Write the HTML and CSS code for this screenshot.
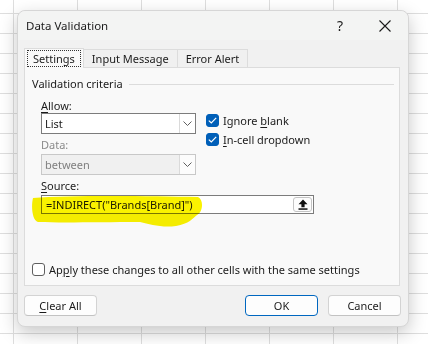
FILE: index.html
```html
<!DOCTYPE html>
<html lang="en">
<head>
    <meta charset="UTF-8">
    <title>Data Validation</title>
    <link rel="stylesheet" href="styles.css">
</head>
<body>
<div class="sheet">
    <div class="dialog">
        <div class="titlebar">
            <span class="title">Data Validation</span>
            <span class="help">?</span>
            <span class="close">
                <svg width="12" height="12" viewBox="0 0 12 12"><path d="M0.5 0.5 L11.5 11.5 M11.5 0.5 L0.5 11.5" stroke="#1b1b1b" stroke-width="1.1" fill="none"/></svg>
            </span>
        </div>

        <div class="tabs">
            <div class="tab active"><span class="focus">Settings</span></div>
            <div class="tab">Input Message</div>
            <div class="tab">Error Alert</div>
        </div>

        <div class="panel">
            <div class="legend">
                <span>Validation criteria</span>
                <span class="rule"></span>
            </div>

            <div class="criteria">
                <div class="row">
                    <div class="leftcol">
                        <div class="label first"><u>A</u>llow:</div>
                        <div class="select">
                            <span class="value">List</span>
                            <span class="drop"><svg width="9" height="5" viewBox="0 0 9 5"><path d="M0.5 0.5 L4.5 4.5 L8.5 0.5" stroke="#5f5f5f" stroke-width="1" fill="none"/></svg></span>
                        </div>
                        <div class="label disabled">Data:</div>
                        <div class="select off">
                            <span class="value">between</span>
                            <span class="drop"><svg width="9" height="5" viewBox="0 0 9 5"><path d="M0.5 0.5 L4.5 4.5 L8.5 0.5" stroke="#5f5f5f" stroke-width="1" fill="none"/></svg></span>
                        </div>
                    </div>
                    <div class="rightcol">
                        <div class="check">
                            <span class="box on"><svg width="9" height="7" viewBox="0 0 9 7"><path d="M0.8 3.6 L3.3 6 L8.2 0.9" stroke="#fff" stroke-width="1.2" fill="none"/></svg></span>
                            <span>Ignore <u>b</u>lank</span>
                        </div>
                        <div class="check">
                            <span class="box on"><svg width="9" height="7" viewBox="0 0 9 7"><path d="M0.8 3.6 L3.3 6 L8.2 0.9" stroke="#fff" stroke-width="1.2" fill="none"/></svg></span>
                            <span><u>I</u>n-cell dropdown</span>
                        </div>
                    </div>
                </div>

                <div class="label"><u>S</u>ource:</div>
                <div class="source">
                    <span class="formula">=INDIRECT("Brands[Brand]")</span>
                    <span class="pick">
                        <svg width="10" height="11" viewBox="0 0 10 11"><path d="M5 0.5 L9.5 5.2 L6.6 5.2 L6.6 8.3 L3.4 8.3 L3.4 5.2 L0.5 5.2 Z" fill="#111"/><rect x="0.5" y="9.3" width="9" height="1.5" fill="#111"/></svg>
                    </span>
                </div>
            </div>

            <div class="apply">
                <span class="box"></span>
                <span>Ap<u>p</u>ly these changes to all other cells with the same settings</span>
            </div>
        </div>

        <div class="footer">
            <button type="button" class="btn"><u>C</u>lear All</button>
            <span class="spacer"></span>
            <button type="button" class="btn primary">OK</button>
            <button type="button" class="btn">Cancel</button>
        </div>
    </div>

    <!-- marker highlight drawn over the source box -->
    <svg class="marker" width="428" height="344" viewBox="0 0 428 344">
        <path d="M33 198 C70 195 150 196 198 197 C204 200 203 212 197 215 C193 218 189 224 176 226 C161 228 150 224 140 222 C100 222 62 223 38 222 C32 220 31 206 33 198 Z" fill="#faf200"/>
    </svg>
</div>
</body>
</html>
```

FILE: styles.css
```css
* {
    box-sizing: border-box;
}
body {
    margin: 0;
    font-family: "Noto Sans", "Open Sans", sans-serif;
    font-size: 11px;
    color: #1b1b1b;
}
u {
    text-decoration-thickness: 1px;
    text-underline-offset: 2px;
}

/* excel grid behind the dialog */
.sheet {
    position: relative;
    width: 428px;
    height: 344px;
    overflow: hidden;
    padding: 10px 0 0 17px;
    background-color: #fff;
    background-image:
        linear-gradient(to right, #dedede 1px, transparent 1px),
        linear-gradient(to bottom, #dedede 1px, transparent 1px);
    background-size: 64px 20px;
    background-position: 13px 13px;
}

.dialog {
    width: 392px;
    height: 317px;
    background: #f1f1f1;
    border: 1px solid #d6d6d6;
    border-radius: 8px;
    box-shadow: 0 6px 18px rgba(0, 0, 0, 0.22);
    display: flex;
    flex-direction: column;
}

.titlebar {
    height: 29px;
    margin-bottom: 9px;
    display: flex;
    align-items: center;
    padding-left: 8px;
    background: #f3f4f3;
    border-radius: 8px 8px 0 0;
}
.title {
    font-size: 11.5px;
    flex: 1;
}
.help {
    font-size: 14px;
    width: 44px;
    text-align: center;
}
.close {
    width: 46px;
    display: flex;
    justify-content: center;
}

.tabs {
    display: flex;
    margin-left: 6px;
    height: 19px;
}
.tab {
    height: 19px;
    padding: 0 8px;
    line-height: 18px;
    border: 1px solid #dcdcdc;
    border-bottom: none;
    border-left: none;
    background: #f0f0f0;
}
.tab.active {
    background: #f9f9f9;
    border-left: 1px solid #dcdcdc;
    padding: 1px 2px 0 2px;
    margin-top: -1px;
    height: 20px;
    position: relative;
    z-index: 1;
}
.focus {
    display: block;
    border: 1px dotted #333;
    padding: 0 5px;
    line-height: 15px;
}

.panel {
    width: 376px;
    height: 219px;
    margin-left: 6px;
    margin-top: -1px;
    background: #f9f9f9;
    border: 1px solid #dcdcdc;
    display: flex;
    flex-direction: column;
}

.legend {
    display: flex;
    align-items: center;
    padding: 8px 5px 0 7px;
    line-height: 16px;
}
.rule {
    flex: 1;
    height: 1px;
    background: #dcdcdc;
    margin-left: 6px;
}

.criteria {
    padding-left: 16px;
    margin-top: 6px;
}
.row {
    display: flex;
}
.leftcol {
    width: 155px;
}
.rightcol {
    padding: 13px 0 0 10px;
}

.label {
    height: 20px;
    padding-top: 2px;
    line-height: 18px;
}
.label.first {
    height: 15px;
    padding-top: 0;
    line-height: 15px;
}
.label.disabled {
    color: #8a8a8a;
}

.select {
    height: 21px;
    display: flex;
    background: #fff;
    border: 1px solid #7c7c7c;
}
.select .value {
    flex: 1;
    padding-left: 3px;
    line-height: 19px;
}
.select .drop {
    width: 16px;
    border-left: 1px solid #dadada;
    display: flex;
    align-items: center;
    justify-content: center;
}
.select.off {
    background: #f0f0f0;
    border-color: #c8c8c8;
    color: #7f7f7f;
}
.select.off .drop {
    background: #fcfcfc;
}

.check {
    height: 19px;
    display: flex;
    align-items: center;
    gap: 4px;
}
.box {
    width: 13px;
    height: 13px;
    border: 1px solid #5f5f5f;
    border-radius: 3px;
    background: #fff;
    display: flex;
    align-items: center;
    justify-content: center;
}
.box.on {
    background: #005fb8;
    border-color: #005fb8;
}

.source {
    width: 273px;
    height: 19px;
    display: flex;
    align-items: center;
    background: #fff;
    border: 1px solid #7c7c7c;
    position: relative;
    z-index: 2;
}
.formula {
    flex: 1;
    padding-left: 4px;
}
.pick {
    width: 19px;
    height: 15px;
    margin-right: 1px;
    border: 1px solid #c4c4c4;
    border-radius: 3px;
    background: #fdfdfd;
    display: flex;
    align-items: center;
    justify-content: center;
}

.apply {
    margin-top: auto;
    height: 20px;
    margin-bottom: 6px;
    padding-left: 7px;
    display: flex;
    align-items: center;
    gap: 4px;
}

.footer {
    display: flex;
    gap: 10px;
    padding: 9px 0 0 6px;
}
.spacer {
    flex: 1;
}
.btn {
    width: 73px;
    height: 21px;
    font: inherit;
    color: #1b1b1b;
    background: #fdfdfd;
    border: 1px solid #d3d3d3;
    border-bottom-color: #c2c2c2;
    border-radius: 4px;
    padding: 0;
}
.btn.primary {
    border: 1px solid #0067c0;
}
.footer .btn:last-child {
    margin-right: 7px;
}

.marker {
    position: absolute;
    left: 0;
    top: 0;
    pointer-events: none;
    mix-blend-mode: multiply;
    z-index: 5;
}
```
